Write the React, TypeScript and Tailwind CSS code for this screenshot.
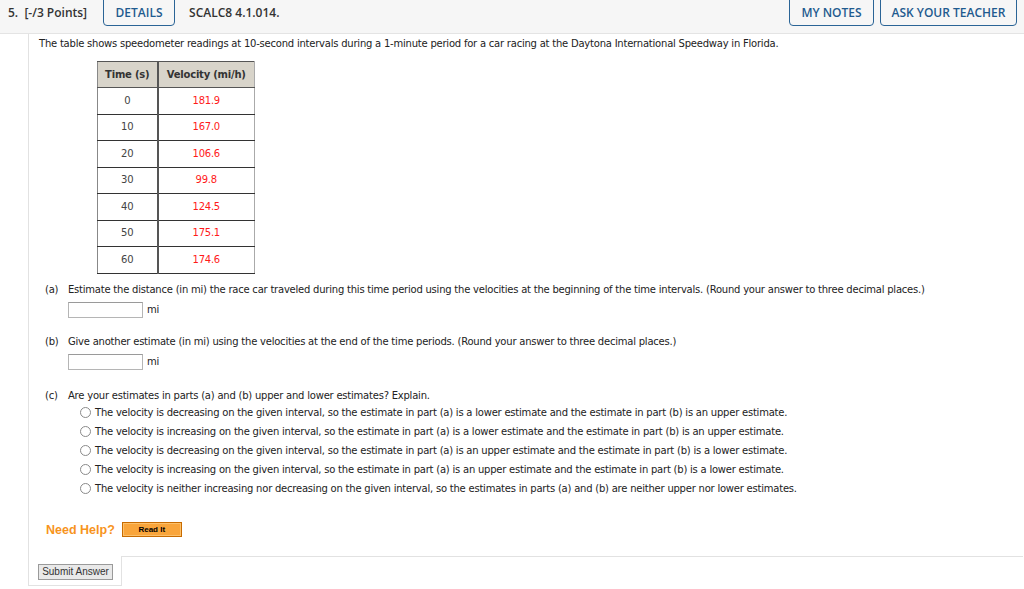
import React from 'react';

const rows: [string, string][] = [
  ['0', '181.9'],
  ['10', '167.0'],
  ['20', '106.6'],
  ['30', '99.8'],
  ['40', '124.5'],
  ['50', '175.1'],
  ['60', '174.6'],
];

const options = [
  'The velocity is decreasing on the given interval, so the estimate in part (a) is a lower estimate and the estimate in part (b) is an upper estimate.',
  'The velocity is increasing on the given interval, so the estimate in part (a) is a lower estimate and the estimate in part (b) is an upper estimate.',
  'The velocity is decreasing on the given interval, so the estimate in part (a) is an upper estimate and the estimate in part (b) is a lower estimate.',
  'The velocity is increasing on the given interval, so the estimate in part (a) is an upper estimate and the estimate in part (b) is a lower estimate.',
  'The velocity is neither increasing nor decreasing on the given interval, so the estimates in parts (a) and (b) are neither upper nor lower estimates.',
];

const body = "font-['DejaVu_Sans',sans-serif] text-[10px] leading-[14px] tracking-[-0.22px] text-[#222]";

function HeaderButton({ label, w }: { label: string; w: string }) {
  return (
    <button className={`${w} h-[30px] -mt-[4px] pt-[3px] border border-[#2a6496] rounded-b-[4px] rounded-t-none text-[#1f5b8f] text-[12px] font-semibold font-['Open_Sans',sans-serif]`}>
      {label}
    </button>
  );
}

function AnswerBox() {
  return (
    <div className="flex items-center gap-[4px] ml-[23px] mt-[5px]">
      <div className="w-[75px] h-[16px] border border-[#b5b5b5] border-t-[#9a9a9a] bg-white" />
      <span>mi</span>
    </div>
  );
}

export default function App() {
  return (
    <div className="w-[1024px] h-[589px] bg-white overflow-hidden">
      <header className="h-[34px] bg-[#f6f6f6] border-b border-[#e4e4e4] flex items-start pl-[8px] pr-[7px] font-['Open_Sans',sans-serif] text-[12px] font-semibold text-[#333]">
        <span className="mt-[4px]">5.&nbsp;&nbsp;[-/3 Points]</span>
        <div className="ml-[16px]">
          <HeaderButton label="DETAILS" w="w-[72px]" />
        </div>
        <span className="mt-[4px] ml-[14px]">SCALC8 4.1.014.</span>
        <div className="ml-auto flex gap-[6px]">
          <HeaderButton label="MY NOTES" w="w-[85px]" />
          <HeaderButton label="ASK YOUR TEACHER" w="w-[137px]" />
        </div>
      </header>

      <div className={`ml-[28px] mr-[1px] h-[523px] border-l border-b border-[#e2e2e2] pl-[10px] pt-[3px] ${body}`}>
        <p>The table shows speedometer readings at 10-second intervals during a 1-minute period for a car racing at the Daytona International Speedway in Florida.</p>

        <table className="ml-[58px] mt-[10px] border-collapse text-center">
          <thead>
            <tr className="bg-[#d8d4ca]">
              <th className="w-[60px] h-[26px] border border-[#555] border-l-[#888] font-bold text-[#333]">Time (s)</th>
              <th className="w-[97px] h-[26px] border border-[#555] border-l-2 border-r-[#aaa] font-bold text-[#333]">Velocity (mi/h)</th>
            </tr>
          </thead>
          <tbody>
            {rows.map(([t, v]) => (
              <tr key={t}>
                <td className="h-[26.5px] border border-[#333] border-l-[#888] text-[#444]">{t}</td>
                <td className="h-[26.5px] border border-[#333] border-l-2 border-l-[#555] border-r-[#aaa] text-[#ff1a1a]">{v}</td>
              </tr>
            ))}
          </tbody>
        </table>

        <div className="mt-[9px] ml-[6px]">
          <div className="flex">
            <span className="w-[23px]">(a)</span>
            <span>Estimate the distance (in mi) the race car traveled during this time period using the velocities at the beginning of the time intervals. (Round your answer to three decimal places.)</span>
          </div>
          <AnswerBox />
        </div>

        <div className="mt-[17px] ml-[6px]">
          <div className="flex">
            <span className="w-[23px]">(b)</span>
            <span>Give another estimate (in mi) using the velocities at the end of the time periods. (Round your answer to three decimal places.)</span>
          </div>
          <AnswerBox />
        </div>

        <div className="mt-[19px] ml-[6px]">
          <div className="flex">
            <span className="w-[23px]">(c)</span>
            <span>Are your estimates in parts (a) and (b) upper and lower estimates? Explain.</span>
          </div>
          <div className="ml-[35px] mt-[3px] flex flex-col gap-[5px]">
            {options.map((o) => (
              <label key={o} className="flex items-center gap-[4px]">
                <span className="w-[11px] h-[11px] rounded-full border border-[#8a8a8a] bg-white shrink-0" />
                <span>{o}</span>
              </label>
            ))}
          </div>
        </div>

        <div className="mt-[27px] ml-[7px] flex items-center gap-[7px] font-['Liberation_Sans',Arial,sans-serif] tracking-normal">
          <span className="text-[#f7941d] text-[12.5px] font-bold">Need Help?</span>
          <button className="w-[60px] h-[15px] mt-[-1px] bg-[#f9a53b] border border-[#c86b00] shadow-[inset_0_0_0_1px_#fcc06a] text-[8px] leading-[13px] font-bold text-black">
            Read It
          </button>
        </div>
      </div>

      <div className="ml-[28px] -mt-px w-[94px] h-[30px] border-l border-r border-b border-[#e2e2e2] bg-white flex items-start pl-[9px] pt-[8px]">
        <button className="w-[75px] h-[16px] px-0 bg-[#e9e9e9] border border-[#9a9a9a] text-[10px] leading-[14px] text-[#333] whitespace-nowrap font-['Liberation_Sans',Arial,sans-serif]">
          Submit Answer
        </button>
      </div>
    </div>
  );
}
